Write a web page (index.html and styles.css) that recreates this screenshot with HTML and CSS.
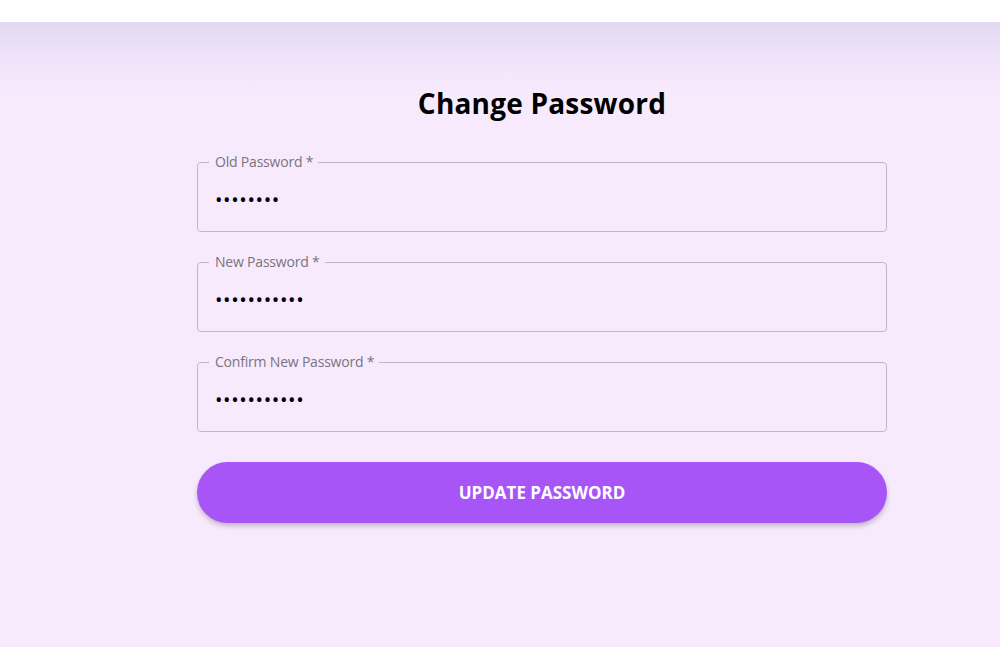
FILE: index.html
```html
<!DOCTYPE html>
<html>
<head>
<meta charset="utf-8">
<link rel="stylesheet" href="styles.css">
</head>
<body>
<div class="topbar"></div>
<main class="page">
  <div class="card">
    <h1 class="title">Change Password</h1>
    <form class="form">
      <div class="field">
        <label class="label">Old Password *</label>
        <input class="input" type="password" value="12345678">
      </div>
      <div class="field">
        <label class="label">New Password *</label>
        <input class="input" type="password" value="12345678901">
      </div>
      <div class="field">
        <label class="label">Confirm New Password *</label>
        <input class="input" type="password" value="12345678901">
      </div>
      <button class="btn" type="button">UPDATE PASSWORD</button>
    </form>
  </div>
</main>
</body>
</html>
```
FILE: styles.css
```css
html, body {
  margin: 0;
  padding: 0;
  height: 100%;
}
body {
  font-family: "Open Sans", "Noto Sans", sans-serif;
  background: #ffffff;
  display: flex;
  flex-direction: column;
}
.topbar {
  height: 22px;
  background: #ffffff;
  flex: none;
}
.page {
  flex: 1;
  background: linear-gradient(to bottom, #e2d9f1 0px, #f1e4fa 40px, #f7eafd 70px, #f7eafd 100%);
  padding-top: 62px;
  padding-left: 197px;
}
.card {
  width: 690px;
}
.title {
  margin: 0;
  text-align: center;
  font-size: 28px;
  line-height: 38px;
  font-weight: 700;
  color: #000;
  letter-spacing: 0.2px;
}
.form {
  margin-top: 40px;
  display: flex;
  flex-direction: column;
  gap: 30px;
}
.field {
  position: relative;
  height: 70px;
  box-sizing: border-box;
  border: 1px solid #c3b5cb;
  border-radius: 4px;
}
.label {
  position: absolute;
  top: -10px;
  left: 11px;
  padding: 0 5px 0 6px;
  font-size: 14px;
  line-height: 18px;
  color: #7a737e;
  background: #f7eafd;
  letter-spacing: -0.2px;
}
.input {
  box-sizing: border-box;
  width: 100%;
  height: 100%;
  border: none;
  outline: none;
  background: transparent;
  padding: 4px 17px 0 17px;
  font-family: "Open Sans", sans-serif;
  font-size: 20px;
  letter-spacing: 0.6px;
  color: #000;
}
.btn {
  height: 61px;
  border: none;
  border-radius: 31px;
  background: #a855f7;
  color: #ffffff;
  font-family: "Open Sans", sans-serif;
  font-size: 17px;
  font-weight: 700;
  letter-spacing: 0;
  box-shadow: 0 3px 5px rgba(0, 0, 0, 0.22);
  cursor: pointer;
}
```
